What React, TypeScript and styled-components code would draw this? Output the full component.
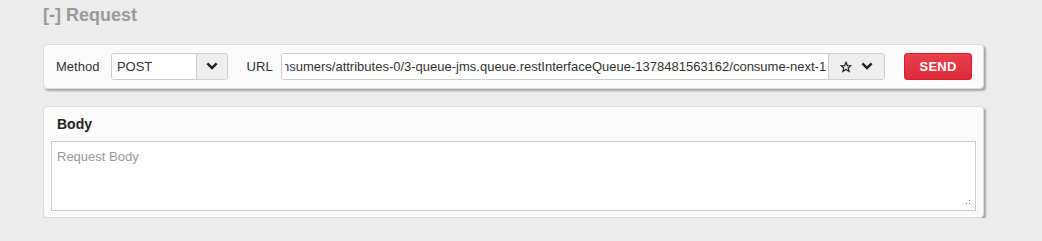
import React, { useState } from 'react';
import styled, { createGlobalStyle } from 'styled-components';

const GlobalStyle = createGlobalStyle`
  html, body {
    margin: 0;
    padding: 0;
    background: #ececec;
    font-family: "Liberation Sans", Arial, sans-serif;
    font-size: 13px;
    color: #333;
  }
`;

const Page = styled.div`
  padding: 4px 58px 0 43px;
  width: 941px;
`;

const Title = styled.h2`
  margin: 0;
  height: 40px;
  line-height: 22px;
  font-size: 18px;
  font-weight: bold;
  color: #9a9a9a;
`;

const Panel = styled.div<{ $gap?: number }>`
  background: #fafafa;
  border: 1px solid #dcdcdc;
  border-radius: 4px;
  box-shadow: 2px 2px 2px rgba(0, 0, 0, 0.3);
  margin-bottom: ${p => p.$gap ?? 0}px;
`;

const Toolbar = styled.div`
  display: flex;
  align-items: center;
  padding: 8px 11px 8px 12px;
`;

const Label = styled.span<{ $width: number; $offset?: number }>`
  width: ${p => p.$width}px;
  margin-left: ${p => p.$offset ?? 0}px;
  color: #333;
`;

const InputGroup = styled.div<{ $width: number }>`
  display: flex;
  width: ${p => p.$width}px;
  height: 27px;
  box-sizing: border-box;
  border: 1px solid #ccc;
  border-radius: 3px;
  background: #fff;
  overflow: hidden;
`;

const Field = styled.input<{ $rtl?: boolean }>`
  flex: 1;
  min-width: 0;
  border: none;
  outline: none;
  padding: ${p => (p.$rtl ? '0 2px 0 3px' : '0 5px')};
  font-family: inherit;
  font-size: 13px;
  color: #333;
  background: #fff;
  direction: ${p => (p.$rtl ? 'rtl' : 'ltr')};
`;

const Addon = styled.div<{ $width: number }>`
  width: ${p => p.$width}px;
  display: flex;
  align-items: center;
  justify-content: center;
  gap: 9px;
  background: #eeeeee;
  border-left: 1px solid #ccc;
  color: #222;
`;

const SendButton = styled.button`
  margin-left: 19px;
  width: 68px;
  height: 27px;
  border: 1px solid #d2202f;
  border-radius: 3px;
  background: linear-gradient(#e8404d, #dd2a38);
  color: #fff;
  font-family: inherit;
  font-weight: bold;
  font-size: 13px;
  letter-spacing: 0.2px;
  cursor: pointer;
`;

const PanelHeader = styled.div`
  padding: 9px 13px 0;
  height: 25px;
  font-size: 14px;
  font-weight: bold;
  color: #222;
`;

const TextWrap = styled.div`
  position: relative;
  margin: 0 7px 6px;
`;

const BodyArea = styled.textarea`
  display: block;
  width: 100%;
  height: 70px;
  box-sizing: border-box;
  border: 1px solid #cccccc;
  resize: none;
  outline: none;
  padding: 7px 5px;
  font-family: inherit;
  font-size: 13px;
  color: #333;
  background: #fff;
  &::placeholder {
    color: #999;
  }
`;

const Grip = styled.svg`
  position: absolute;
  right: 5px;
  bottom: 5px;
`;

const Chevron = () => (
  <svg width="12" height="9" viewBox="0 0 12 9" aria-hidden="true">
    <path d="M0.5 2.2 L2.2 0.5 L6 4.3 L9.8 0.5 L11.5 2.2 L6 7.7 Z" fill="#222" />
  </svg>
);

const Star = () => (
  <svg width="12" height="12" viewBox="0 0 24 24" aria-hidden="true">
    <path
      d="M12 2.5 L14.8 9.1 L21.8 9.4 L16.4 13.9 L18.2 20.8 L12 17 L5.8 20.8 L7.6 13.9 L2.2 9.4 L9.2 9.1 Z"
      fill="none"
      stroke="#222"
      strokeWidth="2.4"
    />
  </svg>
);

export default function App() {
  const [method, setMethod] = useState('POST');
  const [url, setUrl] = useState(
    'http://localhost:8161/api/consumers/attributes-0/3-queue-jms.queue.restInterfaceQueue-1378481563162/consume-next-1'
  );
  const [body, setBody] = useState('');

  return (
    <>
      <GlobalStyle />
      <Page>
        <Title>[-] Request</Title>
        <Panel $gap={17}>
          <Toolbar>
            <Label $width={55}>Method</Label>
            <InputGroup $width={117}>
              <Field value={method} onChange={e => setMethod(e.target.value)} />
              <Addon $width={30}>
                <Chevron />
              </Addon>
            </InputGroup>
            <Label $width={34} $offset={19}>URL</Label>
            <InputGroup $width={606}>
              <Field $rtl value={url} onChange={e => setUrl(e.target.value)} />
              <Addon $width={55}>
                <Star />
                <Chevron />
              </Addon>
            </InputGroup>
            <SendButton>SEND</SendButton>
          </Toolbar>
        </Panel>
        <Panel>
          <PanelHeader>Body</PanelHeader>
          <TextWrap>
            <BodyArea placeholder="Request Body" value={body} onChange={e => setBody(e.target.value)} />
            <Grip width="6" height="6" viewBox="0 0 6 6" aria-hidden="true">
              <rect x="4" y="0" width="1" height="1" fill="#777" />
              <rect x="4" y="3" width="1" height="1" fill="#777" />
              <rect x="1" y="3" width="1" height="1" fill="#777" />
            </Grip>
          </TextWrap>
        </Panel>
      </Page>
    </>
  );
}
